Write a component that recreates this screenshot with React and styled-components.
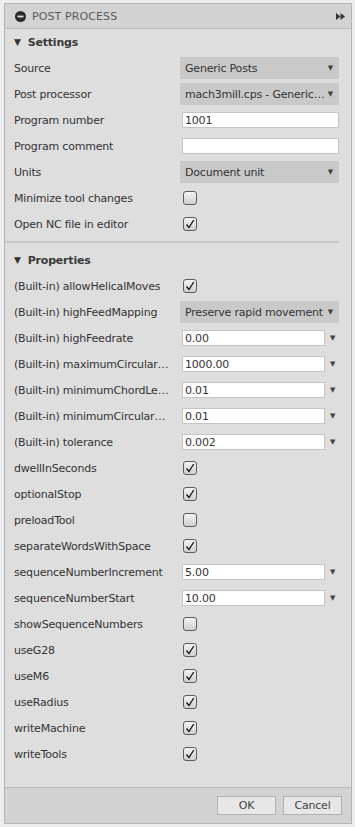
import React from 'react'
import styled, { createGlobalStyle } from 'styled-components'

const Global = createGlobalStyle`
  html, body {
    margin: 0;
    padding: 0;
    background: #ededed;
  }
  body {
    font-family: "DejaVu Sans", "Open Sans", sans-serif;
    font-size: 11px;
    letter-spacing: -0.2px;
    color: #333;
  }
`

const Panel = styled.div`
  width: 348px;
  margin: 3px 0 0 4px;
  border: 1px solid #b4b4b4;
  background: #dedede;
  box-sizing: border-box;
`

const Header = styled.div`
  height: 24px;
  display: flex;
  align-items: center;
  padding: 0 6px 0 10px;
  background: #d3d3d3;
  border-bottom: 1px solid #bcbcbc;
  color: #5a5a5a;
  font-size: 11px;
  letter-spacing: 0.1px;
`

const Title = styled.span`
  flex: 1;
  margin-left: 6px;
`

const Body = styled.div`
  padding: 0 0 20px 0;
`

const SectionHead = styled.div`
  height: 26px;
  display: flex;
  align-items: center;
  padding-left: 9px;
  font-weight: bold;
  color: #3a3a3a;
`

const Tri = styled.span`
  font-size: 9px;
  margin-right: 7px;
  color: #333;
`

const Row = styled.div`
  height: 26px;
  display: flex;
  align-items: center;
  padding-left: 9px;
`

const Label = styled.div`
  flex: 0 0 166px;
  box-sizing: border-box;
  white-space: nowrap;
  overflow: hidden;
  text-overflow: ellipsis;
  padding-right: 9px;
  color: #333;
`

const Control = styled.div`
  flex: 1;
  min-width: 0;
  display: flex;
  align-items: center;
  padding-right: 12px;
`

const Select = styled.div`
  flex: 1;
  min-width: 0;
  height: 22px;
  background: #c9c9c9;
  display: flex;
  align-items: center;
  padding: 0 6px 0 5px;
  white-space: nowrap;
  overflow: hidden;
  color: #333;
`

const SelectText = styled.span`
  flex: 1;
  min-width: 0;
  overflow: hidden;
  text-overflow: ellipsis;
`

const Caret = styled.span`
  font-size: 7px;
  color: #444;
  margin-left: 3px;
`

const Input = styled.div`
  flex: ${p => (p.$combo ? '0 0 143px' : '1')};
  margin-left: 2px;
  height: 16px;
  box-sizing: border-box;
  background: #fff;
  border: 1px solid #c4c4c4;
  display: flex;
  align-items: center;
  padding-left: 2px;
  color: #333;
`

const ComboArrow = styled.span`
  font-size: 7px;
  color: #444;
  margin-left: 5px;
`

const Box = styled.div`
  width: 12px;
  height: 12px;
  margin-left: 3px;
  border: 1px solid #5c5c5c;
  border-radius: 3px;
  background: linear-gradient(#f4f4f4, #cfcfcf);
  display: flex;
  align-items: center;
  justify-content: center;
`

const Divider = styled.div`
  height: 2px;
  background: #c6c6c6;
  margin: 4px 12px 4px 0;
`

const Footer = styled.div`
  height: 35px;
  background: #d3d3d3;
  border-top: 1px solid #b9b9b9;
  display: flex;
  align-items: center;
  justify-content: flex-end;
  gap: 7px;
  padding-right: 9px;
`

const Button = styled.button`
  width: 59px;
  height: 19px;
  font-family: inherit;
  font-size: 11px;
  letter-spacing: inherit;
  color: #444;
  background: #e7e7e7;
  border: 1px solid #b0b0b0;
  border-radius: 0;
  padding: 0;
`

const Check = ({ on }) => (
  <Box>
    {on && (
      <svg width="10" height="10" viewBox="0 0 10 10">
        <path d="M1.5 5.5 L4 8.5 L8.8 1" fill="none" stroke="#111" strokeWidth="1.3" />
      </svg>
    )}
  </Box>
)

const settings = [
  { label: 'Source', type: 'select', value: 'Generic Posts' },
  { label: 'Post processor', type: 'select', value: 'mach3mill.cps - Generic Mach3Mill' },
  { label: 'Program number', type: 'input', value: '1001' },
  { label: 'Program comment', type: 'input', value: '' },
  { label: 'Units', type: 'select', value: 'Document unit' },
  { label: 'Minimize tool changes', type: 'check', value: false },
  { label: 'Open NC file in editor', type: 'check', value: true },
]

const properties = [
  { label: '(Built-in) allowHelicalMoves', type: 'check', value: true },
  { label: '(Built-in) highFeedMapping', type: 'select', value: 'Preserve rapid movement' },
  { label: '(Built-in) highFeedrate', type: 'combo', value: '0.00' },
  { label: '(Built-in) maximumCircularRadius', type: 'combo', value: '1000.00' },
  { label: '(Built-in) minimumChordLength', type: 'combo', value: '0.01' },
  { label: '(Built-in) minimumCircularRadius', type: 'combo', value: '0.01' },
  { label: '(Built-in) tolerance', type: 'combo', value: '0.002' },
  { label: 'dwellInSeconds', type: 'check', value: true },
  { label: 'optionalStop', type: 'check', value: true },
  { label: 'preloadTool', type: 'check', value: false },
  { label: 'separateWordsWithSpace', type: 'check', value: true },
  { label: 'sequenceNumberIncrement', type: 'combo', value: '5.00' },
  { label: 'sequenceNumberStart', type: 'combo', value: '10.00' },
  { label: 'showSequenceNumbers', type: 'check', value: false },
  { label: 'useG28', type: 'check', value: true },
  { label: 'useM6', type: 'check', value: true },
  { label: 'useRadius', type: 'check', value: true },
  { label: 'writeMachine', type: 'check', value: true },
  { label: 'writeTools', type: 'check', value: true },
]

const Field = ({ item }) => {
  if (item.type === 'select') {
    return (
      <Select>
        <SelectText>{item.value}</SelectText>
        <Caret>▼</Caret>
      </Select>
    )
  }
  if (item.type === 'input') return <Input>{item.value}</Input>
  if (item.type === 'combo') {
    return (
      <>
        <Input $combo>{item.value}</Input>
        <ComboArrow>▼</ComboArrow>
      </>
    )
  }
  return <Check on={item.value} />
}

const Rows = ({ items }) =>
  items.map(item => (
    <Row key={item.label}>
      <Label>{item.label}</Label>
      <Control>
        <Field item={item} />
      </Control>
    </Row>
  ))

export default function App() {
  return (
    <>
      <Global />
      <Panel>
        <Header>
          <svg width="11" height="11" viewBox="0 0 11 11">
            <circle cx="5.5" cy="5.5" r="5.5" fill="#2b2b2b" />
            <rect x="2.5" y="4.6" width="6" height="1.8" fill="#e0e0e0" />
          </svg>
          <Title>POST PROCESS</Title>
          <svg width="9" height="7" viewBox="0 0 9 7">
            <path d="M0 0 L4.5 3.5 L0 7 Z M4.5 0 L9 3.5 L4.5 7 Z" fill="#333" />
          </svg>
        </Header>
        <Body>
          <SectionHead><Tri>▼</Tri>Settings</SectionHead>
          <Rows items={settings} />
          <Divider />
          <SectionHead><Tri>▼</Tri>Properties</SectionHead>
          <Rows items={properties} />
        </Body>
        <Footer>
          <Button>OK</Button>
          <Button>Cancel</Button>
        </Footer>
      </Panel>
    </>
  )
}
